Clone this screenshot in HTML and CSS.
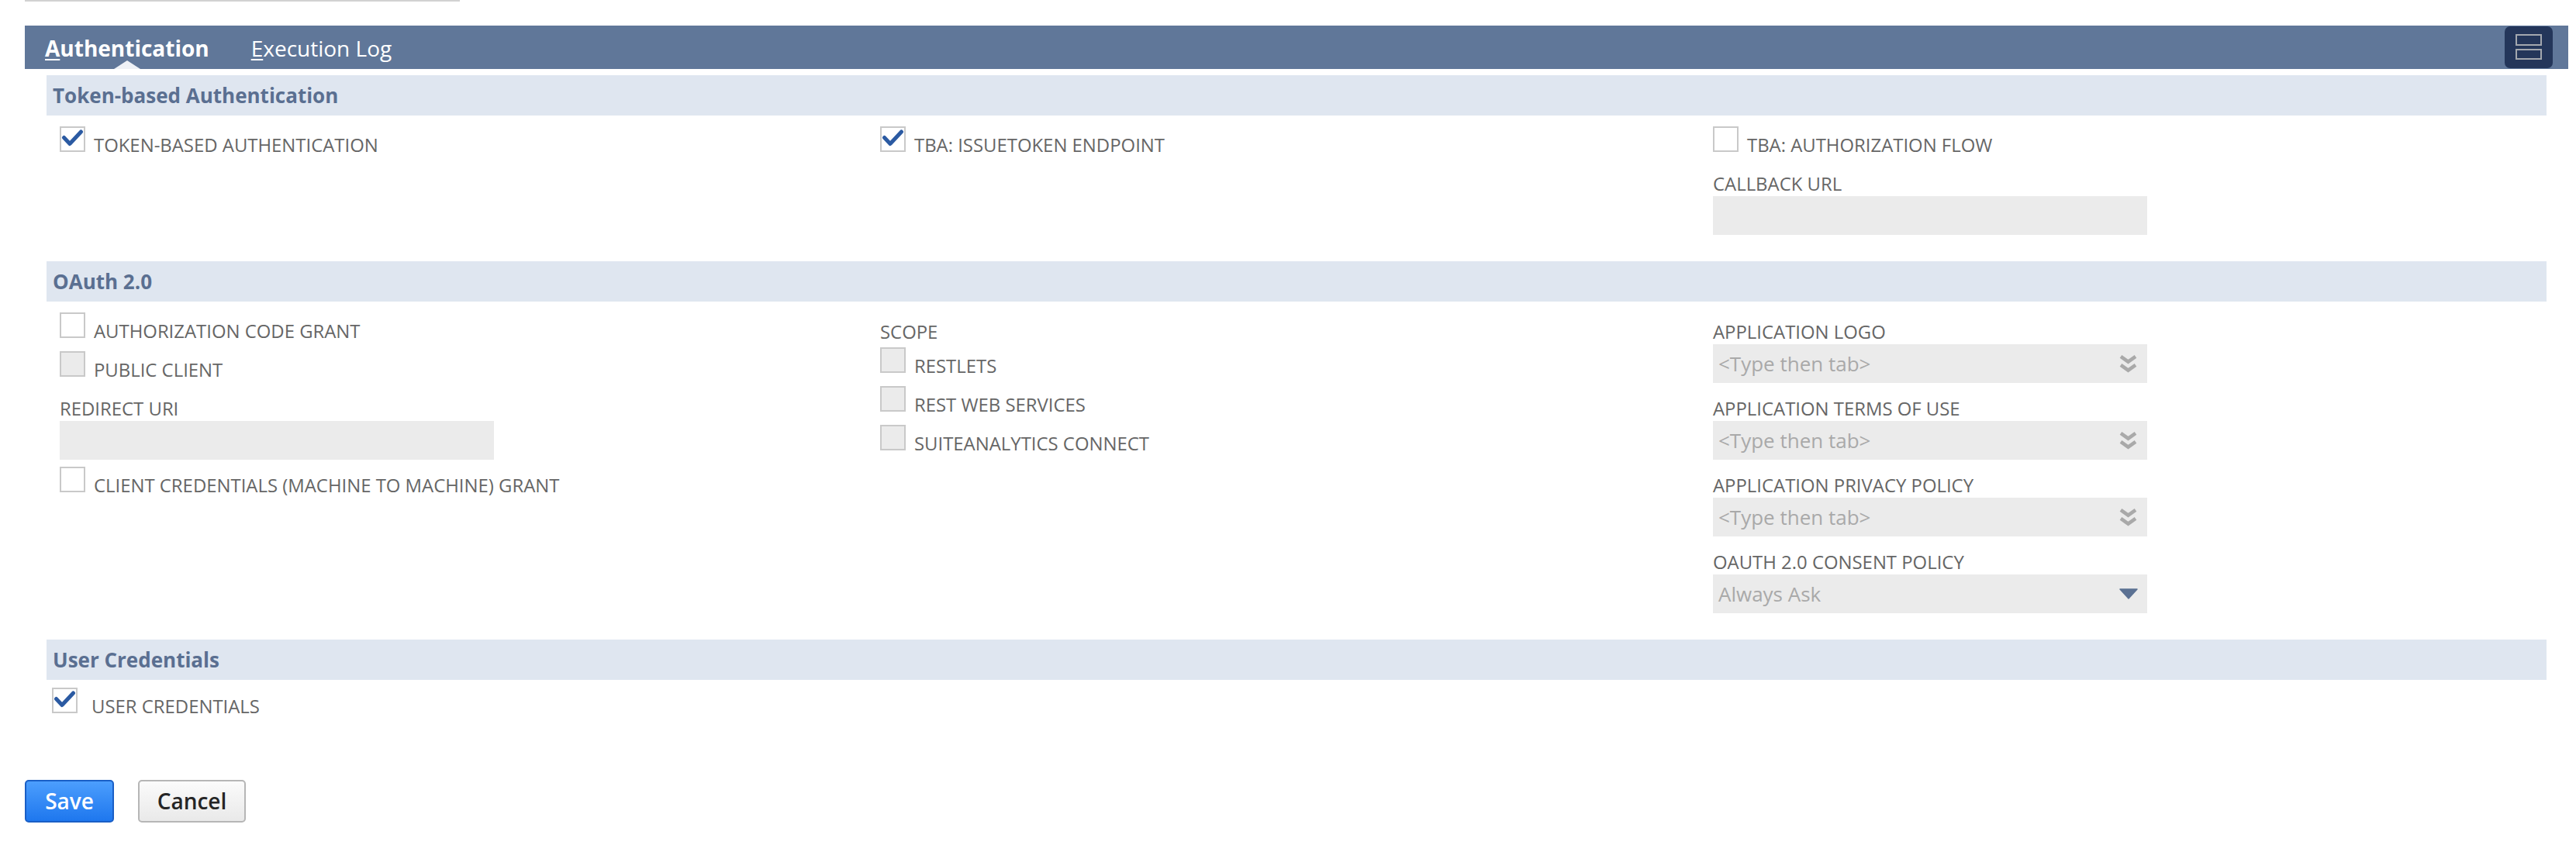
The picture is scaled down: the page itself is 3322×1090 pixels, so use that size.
FILE: index.html
```html
<!DOCTYPE html>
<html lang="en">
<head>
<meta charset="utf-8">
<title>Integration - Authentication</title>
<link rel="stylesheet" href="styles.css">
</head>
<body>
<div class="topline"></div>
<div class="page">
  <div class="tabbar">
    <div class="tabs">
      <div class="tab active"><span class="ak">A</span>uthentication<span class="pointer"></span></div>
      <div class="tab"><span class="ak">E</span>xecution Log</div>
    </div>
    <button class="layout-btn" type="button" aria-label="Layout">
      <svg width="34" height="34" viewBox="0 0 34 34"><rect x="1" y="1" width="32" height="13" fill="none" stroke="#a3a7ae" stroke-width="2"/><rect x="1" y="20" width="32" height="12" fill="none" stroke="#a3a7ae" stroke-width="2"/></svg>
    </button>
  </div>

  <section class="section">
    <h2 class="sec-head">Token-based Authentication</h2>
    <div class="sec-body cols">
      <div class="col">
        <div class="cb-row"><span class="cb checked"><svg viewBox="0 0 29 29"><path d="M3.5 12.5 L11 20.5 L25.5 5" fill="none" stroke="#2b5aa2" stroke-width="5" stroke-linejoin="round" stroke-linecap="round"/></svg></span><span class="cb-label">TOKEN-BASED AUTHENTICATION</span></div>
      </div>
      <div class="col">
        <div class="cb-row"><span class="cb checked"><svg viewBox="0 0 29 29"><path d="M3.5 12.5 L11 20.5 L25.5 5" fill="none" stroke="#2b5aa2" stroke-width="5" stroke-linejoin="round" stroke-linecap="round"/></svg></span><span class="cb-label">TBA: ISSUETOKEN ENDPOINT</span></div>
      </div>
      <div class="col">
        <div class="cb-row"><span class="cb"></span><span class="cb-label">TBA: AUTHORIZATION FLOW</span></div>
        <div class="field">
          <div class="field-label">CALLBACK URL</div>
          <div class="input"></div>
        </div>
      </div>
    </div>
  </section>

  <section class="section">
    <h2 class="sec-head">OAuth 2.0</h2>
    <div class="sec-body cols">
      <div class="col">
        <div class="cb-row"><span class="cb"></span><span class="cb-label">AUTHORIZATION CODE GRANT</span></div>
        <div class="cb-row"><span class="cb disabled"></span><span class="cb-label">PUBLIC CLIENT</span></div>
        <div class="field">
          <div class="field-label">REDIRECT URI</div>
          <div class="input"></div>
        </div>
        <div class="cb-row"><span class="cb"></span><span class="cb-label">CLIENT CREDENTIALS (MACHINE TO MACHINE) GRANT</span></div>
      </div>
      <div class="col">
        <div class="field first">
          <div class="field-label scope">SCOPE</div>
          <div class="cb-row"><span class="cb disabled"></span><span class="cb-label">RESTLETS</span></div>
          <div class="cb-row"><span class="cb disabled"></span><span class="cb-label">REST WEB SERVICES</span></div>
          <div class="cb-row"><span class="cb disabled"></span><span class="cb-label">SUITEANALYTICS CONNECT</span></div>
        </div>
      </div>
      <div class="col">
        <div class="field first">
          <div class="field-label">APPLICATION LOGO</div>
          <div class="input select"><span class="ph">&lt;Type then tab&gt;</span>
            <svg class="dbl" width="25" height="25" viewBox="0 0 25 25"><polyline points="3,2.8 12.5,9.6 22,2.8" fill="none" stroke="#a9a9a9" stroke-width="4.6" stroke-linejoin="miter"/><polyline points="3,13.8 12.5,20.6 22,13.8" fill="none" stroke="#a9a9a9" stroke-width="4.6" stroke-linejoin="miter"/></svg>
          </div>
        </div>
        <div class="field next">
          <div class="field-label">APPLICATION TERMS OF USE</div>
          <div class="input select"><span class="ph">&lt;Type then tab&gt;</span>
            <svg class="dbl" width="25" height="25" viewBox="0 0 25 25"><polyline points="3,2.8 12.5,9.6 22,2.8" fill="none" stroke="#a9a9a9" stroke-width="4.6" stroke-linejoin="miter"/><polyline points="3,13.8 12.5,20.6 22,13.8" fill="none" stroke="#a9a9a9" stroke-width="4.6" stroke-linejoin="miter"/></svg>
          </div>
        </div>
        <div class="field next">
          <div class="field-label">APPLICATION PRIVACY POLICY</div>
          <div class="input select"><span class="ph">&lt;Type then tab&gt;</span>
            <svg class="dbl" width="25" height="25" viewBox="0 0 25 25"><polyline points="3,2.8 12.5,9.6 22,2.8" fill="none" stroke="#a9a9a9" stroke-width="4.6" stroke-linejoin="miter"/><polyline points="3,13.8 12.5,20.6 22,13.8" fill="none" stroke="#a9a9a9" stroke-width="4.6" stroke-linejoin="miter"/></svg>
          </div>
        </div>
        <div class="field next">
          <div class="field-label">OAUTH 2.0 CONSENT POLICY</div>
          <div class="input select"><span class="ph">Always Ask</span>
            <svg class="tri" width="24" height="14" viewBox="0 0 24 14"><polygon points="1,1 23,1 12,13" fill="#5b7193" stroke="#5b7193" stroke-width="1.5" stroke-linejoin="round"/></svg>
          </div>
        </div>
      </div>
    </div>
  </section>

  <section class="section">
    <h2 class="sec-head">User Credentials</h2>
    <div class="sec-body user">
      <div class="cb-row wide"><span class="cb checked"><svg viewBox="0 0 29 29"><path d="M3.5 12.5 L11 20.5 L25.5 5" fill="none" stroke="#2b5aa2" stroke-width="5" stroke-linejoin="round" stroke-linecap="round"/></svg></span><span class="cb-label">USER CREDENTIALS</span></div>
    </div>
  </section>

  <div class="actions">
    <button class="btn save" type="button">Save</button>
    <button class="btn cancel" type="button">Cancel</button>
  </div>
</div>
</body>
</html>
```
FILE: styles.css
```css
* { box-sizing: border-box; }
html, body { margin: 0; padding: 0; background: #ffffff; }
body {
  font-family: "Open Sans", "Liberation Sans", sans-serif;
  color: #666666;
  width: 3322px;
}
.topline {
  margin-left: 32px;
  width: 561px;
  height: 2px;
  background: #d2d2d2;
}
.page {
  padding-left: 32px;
}
.tabbar {
  margin-top: 31px;
  width: 3280px;
  height: 56px;
  background: #607799;
  display: flex;
  align-items: center;
  justify-content: space-between;
  padding: 0 20px 0 26px;
}
.tabs {
  display: flex;
  gap: 54px;
  height: 56px;
}
.tab {
  position: relative;
  font-size: 28px;
  line-height: 56px;
  padding-top: 1px;
  color: #ffffff;
  white-space: nowrap;
}
.tab.active { font-weight: 700; }
.ak {
  text-decoration: underline;
  text-decoration-thickness: 2px;
  text-underline-offset: 3px;
}
.pointer {
  position: absolute;
  left: 50%;
  bottom: 0;
  margin-left: -17px;
  width: 0;
  height: 0;
  border-left: 17px solid transparent;
  border-right: 17px solid transparent;
  border-bottom: 11px solid #eef1f6;
}
.layout-btn {
  width: 62px;
  height: 54px;
  border: 0;
  border-radius: 7px;
  background: #24365a;
  padding: 0;
  display: flex;
  align-items: center;
  justify-content: center;
}
.layout-btn svg { display: block; }

.section {
  margin-left: 28px;
  width: 3224px;
}
.sec-head {
  margin: 0;
  height: 52px;
  line-height: 52px;
  padding-left: 8px;
  background: #dfe6f0;
  color: #5a6f91;
  font-size: 26px;
  font-weight: 700;
}
.section:first-of-type .sec-head { margin-top: 8px; }
.sec-body {
  padding: 14px 0 34px 17px;
}
.cols {
  display: grid;
  grid-template-columns: 1058px 1074px 1fr;
  align-items: start;
}
.col { display: flex; flex-direction: column; }

.cb-row {
  display: flex;
  align-items: flex-end;
  height: 33px;
}
.cb-row + .cb-row { margin-top: 17px; }
.field + .cb-row { margin-top: 9px; }
.cb {
  flex: none;
  width: 33px;
  height: 33px;
  border: 2px solid #c9c9c9;
  background: #ffffff;
  display: block;
}
.cb svg { display: block; width: 29px; height: 29px; }
.cb.disabled { background: #ebebeb; }
.cb-label {
  margin-left: 11px;
  margin-bottom: -3px;
  font-size: 23.9px;
  line-height: 24px;
  color: #666666;
  white-space: nowrap;
}
.field { display: flex; flex-direction: column; }
.cb-row + .field { margin-top: 29px; }
.field.first { margin-top: 13px; }
.field.next { margin-top: 21px; }
.field-label {
  font-size: 23.9px;
  line-height: 24px;
  color: #666666;
  margin-bottom: 4px;
  white-space: nowrap;
}
.field-label.scope { margin-bottom: 8px; }
.input {
  width: 560px;
  height: 50px;
  background: #ebebeb;
}
.select {
  display: flex;
  align-items: center;
  justify-content: space-between;
  padding: 0 12px 0 7px;
}
.ph {
  font-size: 26px;
  line-height: 50px;
  color: #a9a9a9;
  white-space: nowrap;
}
.select svg { display: block; flex: none; }

.user { padding: 10px 0 0 7px; }
.cb-row.wide .cb-label { margin-left: 18px; }

.actions {
  margin-top: 86px;
  display: flex;
  gap: 31px;
}
.btn {
  height: 55px;
  font-family: "Open Sans", "Liberation Sans", sans-serif;
  font-size: 28px;
  line-height: 51px;
  padding: 0;
  border-radius: 5px;
  cursor: pointer;
}
.save {
  width: 115px;
  border: 2px solid #1a5fc6;
  background: linear-gradient(#4c9efd, #1e77ee);
  color: #ffffff;
  font-weight: 600;
}
.cancel {
  width: 139px;
  border: 2px solid #b6b6b6;
  background: linear-gradient(#fbfbfb, #e9e9e9);
  color: #252525;
  font-weight: 600;
}
```
